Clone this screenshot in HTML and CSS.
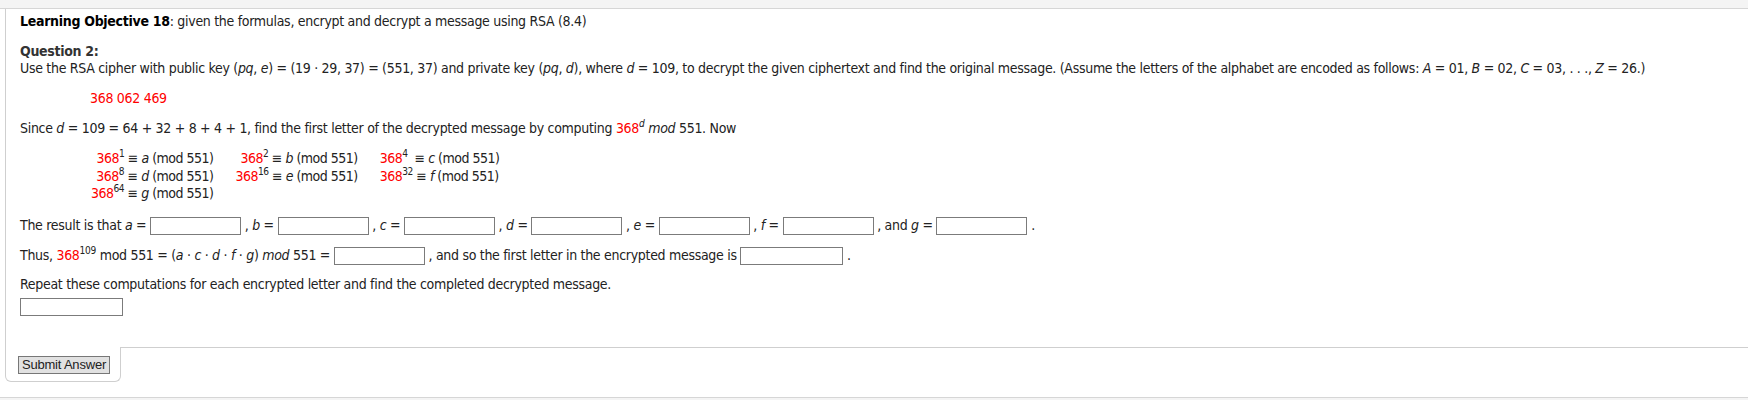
FILE: index.html
```html
<!DOCTYPE html>
<html>
<head>
<meta charset="utf-8">
<link rel="stylesheet" href="styles.css">
</head>
<body>
<div class="topbar"></div>
<div class="qbox">
  <p class="lo"><b>Learning Objective 18</b>: given the formulas, encrypt and decrypt a message using RSA (8.4)</p>
  <p><b class="qhead">Question 2:</b><br>Use the RSA cipher with public key (<i>pq</i>, <i>e</i>) = (19 · 29, 37) = (551, 37) and private key (<i>pq</i>, <i>d</i>), where <i>d</i> = 109, to decrypt the given ciphertext and find the original message. (Assume the letters of the alphabet are encoded as follows: <i>A</i> = 01, <i>B</i> = 02, <i>C</i> = 03, . . ., <i>Z</i> = 26.)</p>
  <p class="cipher">368 062 469</p>
  <p class="since">Since <i>d</i> = 109 = 64 + 32 + 8 + 4 + 1, find the first letter of the decrypted message by computing <span class="red">368</span><sup><i>d</i></sup> <i>mod</i> 551. Now</p>
  <table class="powers">
    <tr>
      <td class="r"><span class="red">368</span><sup>1</sup> ≡ <i>a</i> (mod 551)</td>
      <td class="r"><span class="red">368</span><sup>2</sup> ≡ <i>b</i> (mod 551)</td>
      <td class="l"><span class="red">368</span><sup>4</sup>&nbsp; ≡ <i>c</i> (mod 551)</td>
    </tr>
    <tr>
      <td class="r"><span class="red">368</span><sup>8</sup> ≡ <i>d</i> (mod 551)</td>
      <td class="r"><span class="red">368</span><sup>16</sup> ≡ <i>e</i> (mod 551)</td>
      <td class="l"><span class="red">368</span><sup>32</sup> ≡ <i>f</i> (mod 551)</td>
    </tr>
    <tr>
      <td class="r"><span class="red">368</span><sup>64</sup> ≡ <i>g</i> (mod 551)</td>
      <td></td>
      <td></td>
    </tr>
  </table>
  <p class="line">The result is that <i>a</i> = <input class="ans" type="text"> , <i>b</i> = <input class="ans" type="text"> , <i>c</i> = <input class="ans" type="text"> , <i>d</i> = <input class="ans" type="text"> , <i>e</i> = <input class="ans" type="text"> , <i>f</i> = <input class="ans" type="text"> , and <i>g</i> = <input class="ans" type="text"> .</p>
  <p class="line">Thus, <span class="red">368</span><sup>109</sup> mod 551 = (<i>a</i> · <i>c</i> · <i>d</i> · <i>f</i> · <i>g</i>) <i>mod</i> 551 = <input class="ans" type="text"> , and so the first letter in the encrypted message is <input class="ans wide" type="text"> .</p>
  <p class="repeat">Repeat these computations for each encrypted letter and find the completed decrypted message.</p>
  <p class="last"><input class="ans wide" type="text"></p>
</div>
<div class="footer">
  <div class="tab"><button class="submit" type="button">Submit Answer</button></div>
  <div class="rest"></div>
</div>
<div class="bottombar"></div>
</body>
</html>
```

FILE: styles.css
```css
html, body {
  margin: 0;
  padding: 0;
  background: #ffffff;
}

body {
  font-family: "DejaVu Sans Condensed", "DejaVu Sans", sans-serif;
  font-stretch: condensed;
  font-size: 14px;
  letter-spacing: -0.3px;
  line-height: 17px;
  color: #222222;
  overflow: hidden;
  height: 400px;
}

.topbar {
  height: 8px;
  background: #f4f4f4;
  border-bottom: 1px solid #d6d6d6;
}

.qbox {
  margin-left: 5px;
  border-left: 1px solid #cfcfcf;
  padding: 4px 0 31px 14px;
}

.qbox p {
  margin: 0 0 13px 0;
  white-space: nowrap;
}

.lo b {
  color: #000000;
}

.qhead {
  color: #333333;
}

.red {
  color: #ff0000;
}

sup {
  font-size: 0.72em;
  line-height: 0;
  vertical-align: 0.55em;
  color: #222222;
}

.qbox p.cipher {
  padding-left: 70px;
  color: #ff0000;
}

.powers {
  border-collapse: collapse;
  margin: 4px 0 13px 71px;
  letter-spacing: -0.5px;
}

.powers td {
  padding: 0 22px 0 0;
  line-height: 17.5px;
  white-space: nowrap;
}

.powers td.r {
  text-align: right;
}

.powers td.l {
  text-align: left;
}

.qbox p.line {
  line-height: 18px;
  margin-bottom: 11px;
}

.ans {
  box-sizing: border-box;
  width: 91px;
  height: 18px;
  border: 1px solid #7b7b7b;
  border-radius: 0;
  padding: 0;
  margin: 0;
  background: #ffffff;
  vertical-align: middle;
}

.ans.wide {
  width: 103px;
}

.qbox p.repeat {
  margin-bottom: 5px;
}

.qbox p.last {
  margin: 0;
  line-height: 18px;
}

.last .ans {
  vertical-align: top;
}

.footer {
  display: flex;
  align-items: flex-start;
  margin-left: 5px;
}

.tab {
  box-sizing: border-box;
  width: 116px;
  border: 1px solid #cfcfcf;
  border-top: none;
  border-radius: 0 0 6px 6px;
  padding: 9px 0 7px 12px;
}

.rest {
  flex: 1;
  border-top: 1px solid #cfcfcf;
}

.submit {
  display: block;
  box-sizing: border-box;
  height: 18px;
  width: 92px;
  padding: 0;
  margin: 0;
  border: 1px solid #777777;
  border-radius: 0;
  background: #e1e1e1;
  font-family: "Liberation Sans", Arial, sans-serif;
  font-size: 13px;
  letter-spacing: -0.2px;
  line-height: 16px;
  color: #222222;
}

.bottombar {
  margin-top: 15px;
  height: 4px;
  background: #f4f4f4;
  border-top: 1px solid #d6d6d6;
}
```
